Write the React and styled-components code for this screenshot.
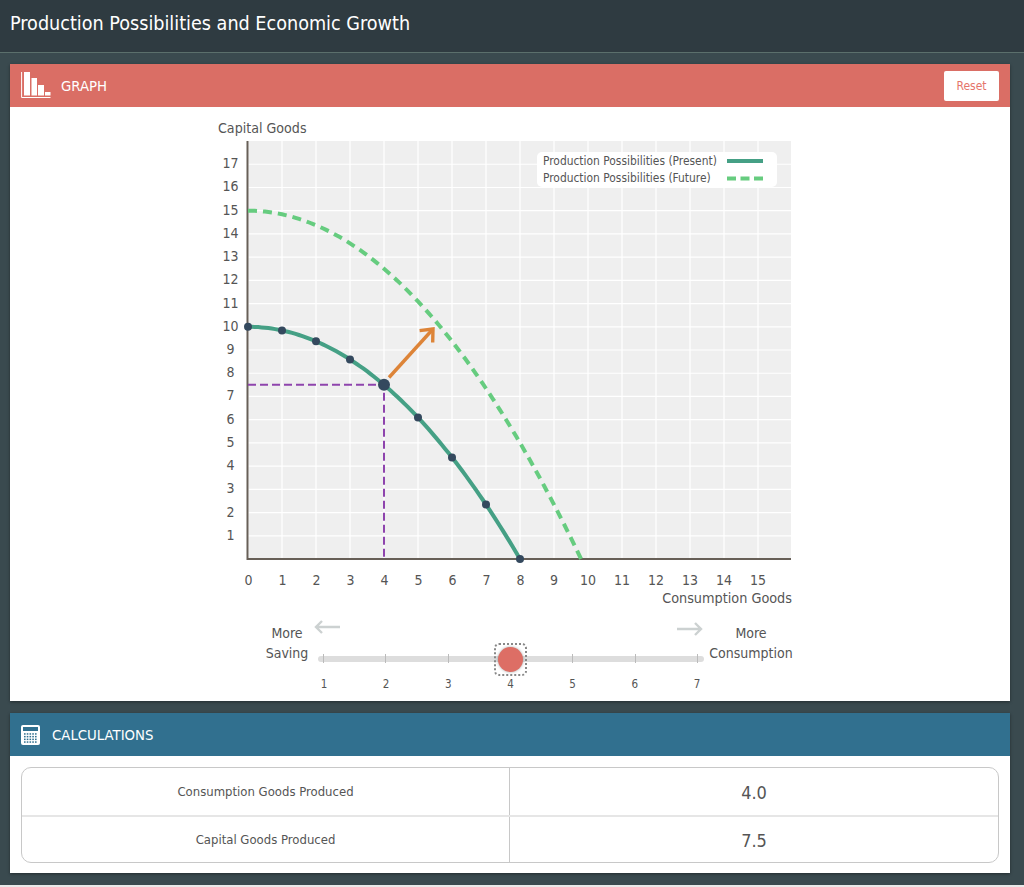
import React from 'react';
import styled, { createGlobalStyle } from 'styled-components';

const Global = createGlobalStyle`
    html, body {
        margin: 0;
        background: #e9e9e9;
    }
    body {
        font-family: 'DejaVu Sans Condensed', 'DejaVu Sans', sans-serif;
        color: #555;
    }
`
const Page = styled.div`
    height: 885px;
    background: #3a4a4f;
    overflow: hidden;
`
const TopBar = styled.header`
    height: 52px;
    box-sizing: content-box;
    display: flex;
    align-items: center;
    padding-left: 10px;
    background: #2f3b41;
    border-bottom: 1px solid #5b6f6c;
`
const Title = styled.h1`
    margin: 0 0 6px;
    font-size: 19.6px;
    font-weight: 400;
    color: #fff;
`
const Content = styled.main`
    display: flex;
    flex-direction: column;
    gap: 12px;
    padding: 11px 14px 0 10px;
`
const Panel = styled.section`
    background: #fff;
    box-shadow: 0 1px 3px rgba(0, 0, 0, 0.4);
`
const PanelHead = styled.div`
    height: 43px;
    display: flex;
    align-items: center;
    padding: 0 11px;
    background: ${props => props.$color};
    color: #fff;
    font-size: 14.8px;
`
const HeadLabel = styled.span`
    margin-left: ${props => props.$gap}px;
    flex: 1;
`
const ResetButton = styled.button`
    width: 55px;
    height: 30px;
    padding: 0;
    border: 0;
    border-radius: 2px;
    background: #fff;
    color: #e5746b;
    font-family: inherit;
    font-size: 12px;
`
const GraphBody = styled.div`
    height: 594px;
    padding-top: 11px;
    box-sizing: border-box;
`
const Chart = styled.svg`
    display: block;
    width: 600px;
    height: 494px;
    margin: 0 auto;
    font-family: 'DejaVu Sans Condensed', 'DejaVu Sans', sans-serif;
`
const SliderRow = styled.div`
    display: flex;
    margin-left: 250px;
`
const SideLabel = styled.div`
    width: ${props => props.$width}px;
    margin-right: ${props => props.$after || 0}px;
    padding-top: 11px;
    text-align: center;
    font-size: 14px;
    line-height: 20px;
    color: #555;
`
const SliderColumn = styled.div`
    width: 386px;
`
const Arrows = styled.div`
    height: 36px;
    display: flex;
    justify-content: space-between;
    align-items: flex-start;
    margin: 8px 1px 0 -4px;
`
const ArrowBox = styled.svg`
    margin-top: ${props => props.$drop}px;
    transform: ${props => (props.$flip ? 'scaleX(-1)' : 'none')};
`
const Track = styled.div`
    position: relative;
    height: 6px;
    border-radius: 3px;
    background: #ddd;
    display: flex;
    justify-content: space-between;
    padding: 0 6px 0 5px;
`
const Tick = styled.i`
    width: 1px;
    height: 9px;
    margin-top: -2px;
    background: #bbb;
`
const Thumb = styled.div`
    position: absolute;
    left: 180px;
    top: -9px;
    width: 25px;
    height: 25px;
    border-radius: 50%;
    background: #dd6e65;
    box-shadow: 0 0 3px rgba(0, 0, 0, 0.35);
    &::after {
        content: '';
        position: absolute;
        inset: -4px;
        border: 2px dotted #888;
        border-radius: 5px;
    }
`
const Numbers = styled.div`
    display: flex;
    justify-content: space-between;
    padding: 15px 1px 0 0;
    font-size: 11.5px;
    color: #555;
`
const Number = styled.span`
    width: 12px;
    text-align: center;
`
const CalcBody = styled.div`
    padding: 11px 11px 10px;
`
const Table = styled.div`
    border: 1px solid #c8c8c8;
    border-radius: 10px;
    overflow: hidden;
`
const Row = styled.div`
    display: grid;
    grid-template-columns: 488px 1fr;
    height: ${props => props.$height}px;
    & + & {
        border-top: 2px solid #e6e6e6;
    }
`
const NameCell = styled.div`
    display: flex;
    align-items: center;
    justify-content: center;
    border-right: 1px solid #c8c8c8;
    font-size: 13px;
    color: #555;
`
const ValueCell = styled.div`
    display: flex;
    align-items: center;
    justify-content: center;
    padding-top: 1px;
    font-size: 18px;
    color: #555;
`

const X0 = 248
const Y0 = 559
const UX = 34
const UY = 23.22
const px = x => X0 + x * UX
const py = y => Y0 - y * UY

const curve = (top, rr, end) => {
    const pts = []
    for (let x = 0; x <= end + 0.001; x += 0.1) {
        pts.push(`${px(x).toFixed(1)},${py(top * (1 - (x * x) / rr)).toFixed(1)}`)
    }
    return pts.join(' ')
}

const range = n => Array.from({ length: n }, (_, i) => i)

function GraphIcon() {
    return (
        <svg width="30" height="27" viewBox="0 0 30 27">
            <path d="M.6 0v25.5H29.5" fill="none" stroke="#fff" strokeWidth="1" />
            <rect x="3" y="0" width="6" height="23.5" fill="#fff" />
            <rect x="10.5" y="6" width="5.5" height="17.5" fill="#fff" />
            <rect x="17" y="13" width="6" height="10.5" fill="#fff" />
            <rect x="24" y="20" width="5.5" height="3.5" fill="#fff" />
        </svg>
    )
}

function CalcIcon() {
    const cells = []
    for (let r = 0; r < 4; r++) {
        for (let c = 0; c < 5; c++) {
            cells.push(<rect key={`${r}-${c}`} x={3 + c * 2.75} y={8.2 + r * 2.7} width="1.6" height="1.5" fill="#31708f" />)
        }
    }
    return (
        <svg width="19" height="20" viewBox="0 0 19 20">
            <rect width="19" height="20" rx="2" fill="#fff" />
            <rect x="2" y="2" width="15" height="4" fill="#31708f" />
            {cells}
        </svg>
    )
}

function SlideArrow({ flip, drop }) {
    return (
        <ArrowBox $flip={flip} $drop={drop} width="27" height="14" viewBox="0 0 27 14">
            <path d="M26 7H2M8 1 2 7l6 6" fill="none" stroke="#ccd1d1" strokeWidth="2.4" />
        </ArrowBox>
    )
}

function Graph() {
    return (
        <Chart viewBox="210 118 600 494">
            <defs>
                <marker id="head" markerWidth="5" markerHeight="6" refX="3.6" refY="3" orient="auto">
                    <path d="M.6.4 3.6 3 .6 5.6" fill="none" stroke="#dd8438" strokeWidth="1" />
                </marker>
            </defs>
            <rect x={X0} y="141" width="543" height="418" fill="#efefef" />
            {range(16).map(i => (
                <line key={i} x1={px(i)} x2={px(i)} y1="141" y2={Y0} stroke="#fff" strokeWidth="1.2" />
            ))}
            {range(18).map(i => (
                <line key={i} x1={X0} x2="791" y1={py(i)} y2={py(i)} stroke="#fff" strokeWidth="1.2" />
            ))}
            <line x1={X0} x2="791" y1={Y0} y2={Y0} stroke="#675f57" strokeWidth="2" />
            <line x1={X0 - 0.5} x2={X0 - 0.5} y1="141" y2="560" stroke="#675f57" strokeWidth="2" />

            <polyline points={curve(15, 96, 9.8)} fill="none" stroke="#66cc7f" strokeWidth="4" strokeDasharray="9 6" />
            <polyline points={curve(10, 64, 8)} fill="none" stroke="#45a085" strokeWidth="4" />

            <path d={`M${X0} ${py(7.5)}H${px(4)}V${Y0}`} fill="none" stroke="#8e44ad" strokeWidth="2" strokeDasharray="8 4" />
            <line x1="389" y1="377.5" x2="433" y2="329" stroke="#dd8438" strokeWidth="3.4" markerEnd="url(#head)" />

            {range(9).map(i => (
                <circle key={i} cx={px(i)} cy={py(10 * (1 - (i * i) / 64))} r={i === 4 ? 6 : 4} fill="#34495e" />
            ))}

            <g fontSize="14" fill="#555" textAnchor="middle">
                {range(17).map(i => (
                    <text key={i} x="230.5" y={py(i + 1) + 4}>{i + 1}</text>
                ))}
                {range(16).map(i => (
                    <text key={i} x={px(i) + (i > 8 ? 0 : 0.5)} y="585">{i}</text>
                ))}
            </g>
            <text x="218" y="133" fontSize="14.1" fill="#555">Capital Goods</text>
            <text x="792" y="603" fontSize="14.3" fill="#555" textAnchor="end">Consumption Goods</text>

            <rect x="537" y="152" width="240" height="35" rx="5" fill="#fff" />
            <text x="543" y="165" fontSize="11.9" fill="#555">Production Possibilities (Present)</text>
            <text x="543" y="182" fontSize="11.9" fill="#555">Production Possibilities (Future)</text>
            <line x1="727" x2="763" y1="161" y2="161" stroke="#45a085" strokeWidth="4" />
            <line x1="727" x2="763" y1="178.500" y2="178.500" stroke="#66cc7f" strokeWidth="4" strokeDasharray="9 4.500" />
        </Chart>
    )
}

export default function App() {
    return (
        <Page>
            <Global />
            <TopBar>
                <Title>Production Possibilities and Economic Growth</Title>
            </TopBar>
            <Content>
                <Panel>
                    <PanelHead $color="#da6e65">
                        <GraphIcon />
                        <HeadLabel $gap={10}>GRAPH</HeadLabel>
                        <ResetButton>Reset</ResetButton>
                    </PanelHead>
                    <GraphBody>
                        <Graph />
                        <SliderRow>
                            <SideLabel $width={54} $after={4}>More<br />Saving</SideLabel>
                            <SliderColumn>
                                <Arrows>
                                    <SlideArrow drop={0} />
                                    <SlideArrow flip drop={2} />
                                </Arrows>
                                <Track>
                                    {range(7).map(i => <Tick key={i} />)}
                                    <Thumb />
                                </Track>
                                <Numbers>
                                    {range(7).map(i => <Number key={i}>{i + 1}</Number>)}
                                </Numbers>
                            </SliderColumn>
                            <SideLabel $width={94}>More<br />Consumption</SideLabel>
                        </SliderRow>
                    </GraphBody>
                </Panel>
                <Panel>
                    <PanelHead $color="#31708f">
                        <CalcIcon />
                        <HeadLabel $gap={12}>CALCULATIONS</HeadLabel>
                    </PanelHead>
                    <CalcBody>
                        <Table>
                            <Row $height={47}>
                                <NameCell>Consumption Goods Produced</NameCell>
                                <ValueCell>4.0</ValueCell>
                            </Row>
                            <Row $height={45}>
                                <NameCell>Capital Goods Produced</NameCell>
                                <ValueCell>7.5</ValueCell>
                            </Row>
                        </Table>
                    </CalcBody>
                </Panel>
            </Content>
        </Page>
    )
}
